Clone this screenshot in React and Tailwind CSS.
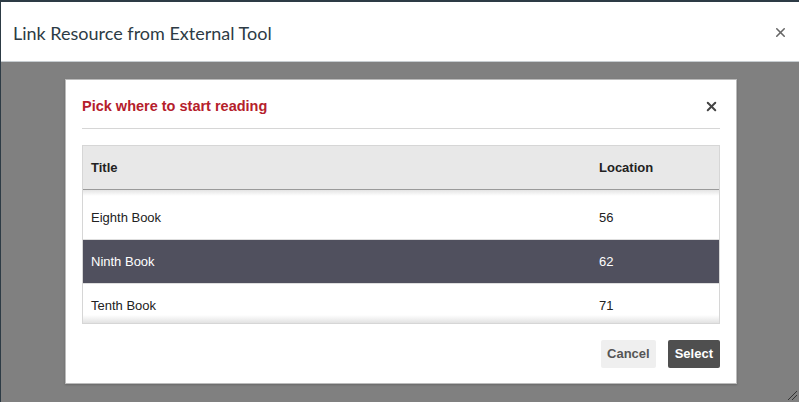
import { X } from "lucide-react";

const ROWS = [
  { title: "Eighth Book", location: "56" },
  { title: "Ninth Book", location: "62", active: true },
  { title: "Tenth Book", location: "71" },
];

export default function App() {
  return (
    <div className="w-[799px] h-[402px] overflow-hidden flex flex-col bg-[#808080] border-t-2 border-l border-[#2d3b45] relative">
      {/* Outer dialog header */}
      <div className="h-[60px] shrink-0 bg-white border-b border-[#c7cdd1] flex items-center justify-between pl-3 pr-[11px] pt-[2px]">
        <h1 className="text-[18px] text-[#2d3b45] font-['Lato',sans-serif] leading-none">
          Link Resource from External Tool
        </h1>
        <X size={15} strokeWidth={2.5} className="text-[#666]" />
      </div>

      {/* Tool body */}
      <div className="flex-1 pt-[17px] pl-[64px] font-['Liberation_Sans',Arial,sans-serif]">
        <div className="w-[672px] h-[305px] bg-white border border-[#bbb] shadow-[0_1px_2px_rgba(0,0,0,0.2)] px-4 flex flex-col">
          <div className="h-[49px] shrink-0 flex items-center justify-between border-b border-[#d6d6d6] pt-[5px]">
            <h2 className="text-[14.5px] font-bold text-[#b5202b]">Pick where to start reading</h2>
            <X size={15} strokeWidth={3.2} className="text-[#444] mr-[1px]" />
          </div>

          <div className="mt-4 border border-[#d6d6d6] h-[179px] overflow-hidden flex flex-col relative">
            <div className="h-[44px] shrink-0 bg-[#e8e8e8] border-b border-[#9a9a9a] flex items-center text-[13px] font-bold text-[#222]">
              <div className="flex-1 pl-2">Title</div>
              <div className="w-[120px]">Location</div>
            </div>
            <div className="h-[6px] shrink-0 bg-gradient-to-b from-[#e4e4e4] to-white" />
            {ROWS.map((r) => (
              <div
                key={r.title}
                className={`h-[44px] shrink-0 flex items-center text-[13px] border-b border-[#dedede] ${
                  r.active ? "bg-[#50505e] text-white" : "bg-white text-[#222]"
                }`}
              >
                <div className="flex-1 pl-2">{r.title}</div>
                <div className="w-[120px]">{r.location}</div>
              </div>
            ))}
            <div className="absolute left-0 right-0 bottom-0 h-[8px] bg-gradient-to-t from-[#e2e2e2] to-white/0" />
          </div>

          <div className="mt-4 flex justify-end gap-3">
            <button className="h-[28px] px-[6px] rounded-[2px] bg-[#efefef] text-[#555] text-[13px] font-bold">
              Cancel
            </button>
            <button className="h-[28px] px-[7px] rounded-[2px] bg-[#4f4f4f] text-white text-[13px] font-bold">
              Select
            </button>
          </div>
        </div>
      </div>

      {/* Resize grip */}
      <svg className="absolute right-[1px] bottom-[1px]" width="11" height="11" viewBox="0 0 11 11">
        <path d="M1 10 L10 1 M5 10 L10 5" stroke="#333" strokeWidth="1" />
      </svg>
    </div>
  );
}
